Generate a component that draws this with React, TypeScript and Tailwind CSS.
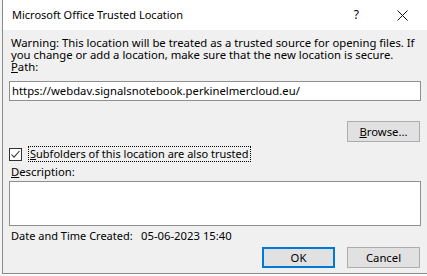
import React from "react";

const font = { fontFamily: '"Noto Sans", "Open Sans", Arial, sans-serif' };

function WinButton({
  children,
  primary = false,
}: {
  children: React.ReactNode;
  primary?: boolean;
}) {
  return (
    <div
      className={
        "flex h-[21px] w-[73px] items-center justify-center bg-[#e1e1e1] text-[11.3px] leading-none text-black " +
        (primary ? "border-2 border-[#0078d7]" : "border border-[#adadad]")
      }
    >
      {children}
    </div>
  );
}

export default function App() {
  return (
    <div
      className="flex h-[276px] w-[427px] overflow-hidden bg-[#fbfbfb] text-[11.3px] text-black"
      style={font}
    >
      {/* whatever lies behind the dialog */}
      <div className="w-[2px] shrink-0 bg-[#f4f4f4]" />

      <div className="flex h-[274px] flex-1 flex-col border-b border-l border-[#8a8a8a]">
        {/* Title bar */}
        <div className="flex h-[30px] shrink-0 items-center bg-white pl-[9px]">
          <span className="text-[11px]">Microsoft Office Trusted Location</span>
          <span className="ml-auto mr-[38px] text-[12px]">?</span>
          <svg width="11" height="11" viewBox="0 0 11 11" className="mr-[19px]">
            <path d="M0.5 0.5L10.5 10.5M10.5 0.5L0.5 10.5" stroke="#111" strokeWidth="1" />
          </svg>
        </div>

        {/* Body */}
        <div className="flex flex-1 flex-col bg-[#f0f0f0] px-[6px] pt-[7px]">
          <div className="pl-[2px] leading-[12px]">
            <div className="whitespace-nowrap">
              Warning: This location will be treated as a trusted source for opening files. If
            </div>
            <div className="whitespace-nowrap">
              you change or add a location, make sure that the new location is secure.
            </div>
            <div>
              <u className="underline-offset-[1px]">P</u>ath:
            </div>
          </div>

          <div className="mt-[8px] flex h-[20px] items-center border border-[#8f8f8f] bg-white pl-[2px] pr-[1px] whitespace-nowrap">
            https://webdav.signalsnotebook.perkinelmercloud.eu/
          </div>

          <div className="mt-[20px] flex justify-end pr-[1px]">
            <WinButton>
              <span>
                <u className="underline-offset-[1px]">B</u>rowse...
              </span>
            </WinButton>
          </div>

          <div className="mt-[4px] flex h-[16px] items-center">
            <div className="flex h-[13px] w-[13px] items-center justify-center border border-[#333] bg-white">
              <svg width="11" height="11" viewBox="0 0 11 11">
                <path d="M1.5 5.5L4 8.2L9.5 2" fill="none" stroke="#333" strokeWidth="1.1" />
              </svg>
            </div>
            <div className="ml-[6px] flex h-[16px] items-center border border-dotted border-black px-[1px] text-[11px] whitespace-nowrap">
              <span>
                <u className="underline-offset-[1px]">S</u>ubfolders of this location are also trusted
              </span>
            </div>
          </div>

          <div className="mt-[3px] h-[13px] pl-[2px] leading-[13px]">
            <u className="underline-offset-[1px]">D</u>escription:
          </div>

          <div className="mt-[3px] h-[45px] border border-[#8f8f8f] bg-white" />

          <div className="mt-[4px] grid h-[12px] grid-cols-[130px_auto] items-center pl-[2px] leading-[12px]">
            <span className="whitespace-nowrap text-[11px]">Date and Time Created:</span>
            <span className="whitespace-nowrap">05-06-2023 15:40</span>
          </div>

          <div className="mt-[5px] flex justify-end gap-[12px] pr-[1px]">
            <WinButton primary>OK</WinButton>
            <WinButton>Cancel</WinButton>
          </div>
        </div>
      </div>
    </div>
  );
}
